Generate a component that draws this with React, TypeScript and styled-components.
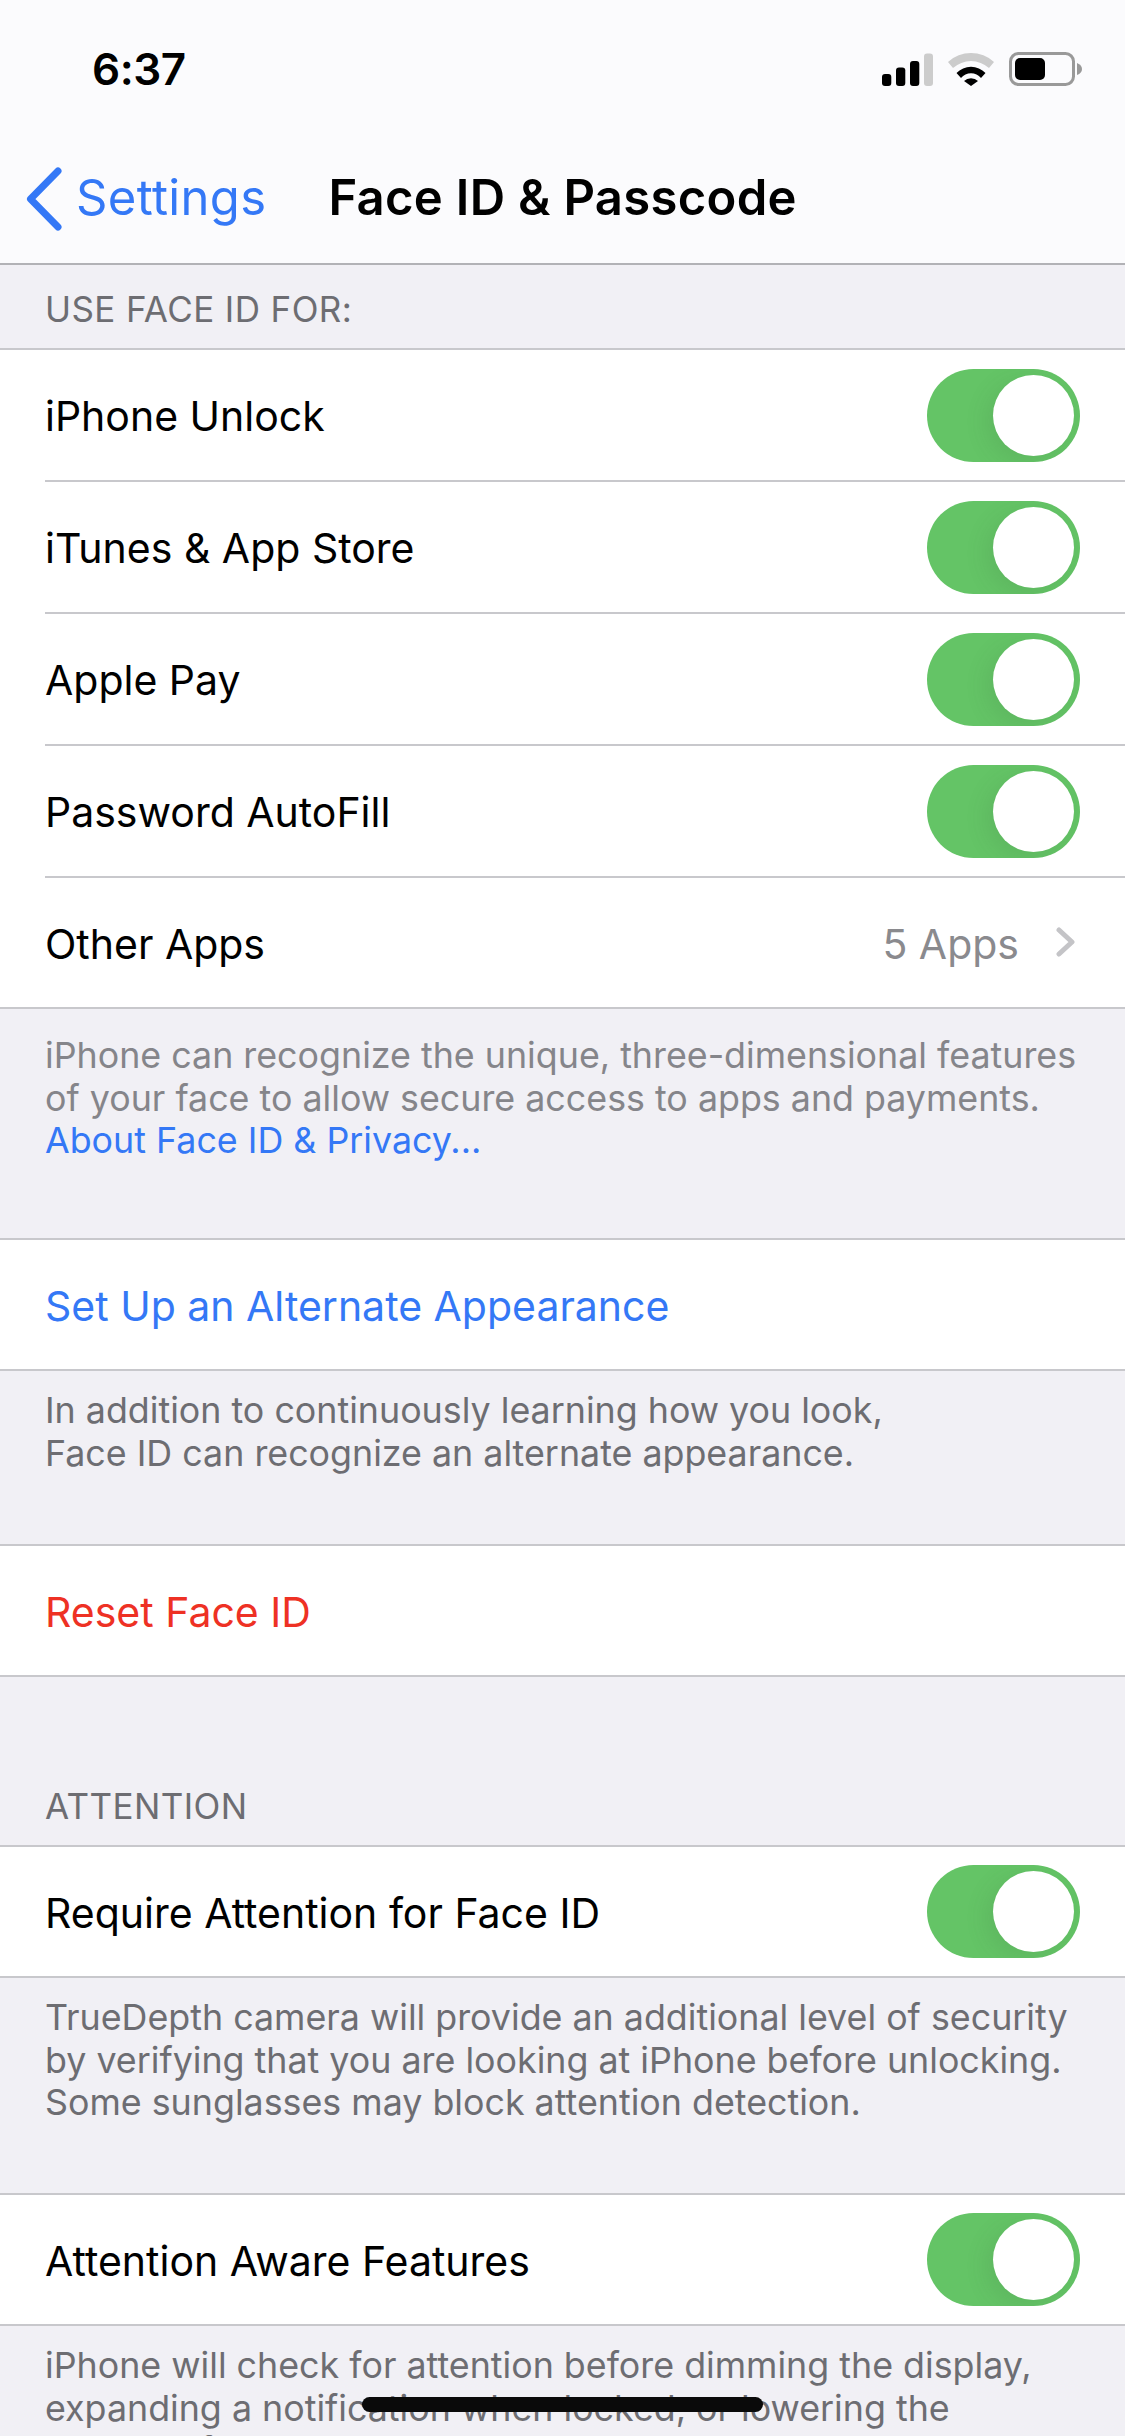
import React from 'react';
import styled, { createGlobalStyle } from 'styled-components';

const GlobalStyle = createGlobalStyle`
  html, body {
    margin: 0;
    padding: 0;
    background: #f1f0f5;
  }
  * {
    box-sizing: border-box;
  }
`;

const Screen = styled.div`
  position: relative;
  width: 1125px;
  height: 2436px;
  overflow: hidden;
  background: #f1f0f5;
  font-family: Inter, 'Liberation Sans', sans-serif;
  color: #000;
`;

const NavArea = styled.header`
  height: 265px;
  background: #fbfbfd;
  border-bottom: 2px solid #b2b2b6;
`;

const StatusBar = styled.div`
  height: 132px;
  display: flex;
  justify-content: space-between;
  align-items: flex-start;
  padding: 45px 43px 0 92px;
`;

const Time = styled.span`
  font-size: 44px;
  line-height: 48px;
  font-weight: 600;
  letter-spacing: -0.5px;
`;

const StatusIcons = styled.div`
  display: flex;
  align-items: center;
  gap: 15px;
  margin-top: 7px;
`;

const NavBar = styled.div`
  height: 131px;
  display: flex;
  align-items: center;
  padding-left: 26px;
`;

const BackLink = styled.div`
  display: flex;
  align-items: center;
  gap: 14px;
  color: #3478f6;
  font-size: 49px;
  letter-spacing: 0.35px;

  svg {
    margin-top: 2px;
  }
`;

const NavTitle = styled.h1`
  margin: 0 0 0 62px;
  font-size: 49px;
  font-weight: 600;
  letter-spacing: 0.3px;
`;

const SectionHeader = styled.div<{ $height: number }>`
  height: ${(p) => p.$height}px;
  display: flex;
  align-items: flex-end;
  padding: 0 45px 18px;
  font-size: 35px;
  line-height: 42px;
  color: #6d6d72;
  letter-spacing: 0.4px;
`;

const Group = styled.div`
  background: #fff;
  border-top: 2px solid #c8c8cc;
  border-bottom: 2px solid #c8c8cc;
`;

const Row = styled.div<{ $divider?: boolean }>`
  height: ${(p) => (p.$divider ? 132 : 129)}px;
  margin-left: 45px;
  padding-right: 45px;
  display: flex;
  align-items: center;
  justify-content: space-between;
  font-size: 41px;
  border-bottom: ${(p) => (p.$divider ? '2px solid #c8c8cc' : 'none')};
`;

const RowLabel = styled.span<{ $color?: string }>`
  padding-top: 2px;
  color: ${(p) => p.$color || '#000'};
`;

const Switch = styled.div`
  position: relative;
  width: 153px;
  height: 93px;
  overflow: hidden;
  border-radius: 47px;
  background: #64c466;
`;

const Knob = styled.div`
  position: absolute;
  top: 6px;
  right: 6px;
  width: 81px;
  height: 81px;
  border-radius: 50%;
  background: #fff;
  box-shadow: -6px 6px 22px rgba(60, 110, 60, 0.16);
`;

const Detail = styled.div`
  display: flex;
  align-items: center;
  gap: 37px;
  margin-right: 5px;
  padding-top: 2px;
  color: #8a8a8e;

  svg {
    margin-top: -3px;
  }
`;

const Footnote = styled.div<{ $height: number; $top?: number; $color?: string }>`
  height: ${(p) => p.$height}px;
  padding: ${(p) => p.$top ?? 18}px 45px 0;
  font-size: 35.8px;
  line-height: 42.6px;
  color: ${(p) => p.$color || '#6d6d72'};
`;

const Link = styled.span`
  color: #3478f6;
`;

const HomeIndicator = styled.div`
  position: absolute;
  left: 362px;
  top: 2397px;
  width: 401px;
  height: 15px;
  border-radius: 8px;
  background: #0a0a0a;
`;

const Toggle = () => (
  <Switch>
    <Knob />
  </Switch>
);

const SignalIcon = () => (
  <svg width="51" height="33" viewBox="0 0 51 33">
    <rect x="0" y="21" width="9.3" height="12" rx="3" fill="#000" />
    <rect x="14" y="14.5" width="9.3" height="18.5" rx="3" fill="#000" />
    <rect x="28" y="8" width="9.3" height="25" rx="3" fill="#000" />
    <rect x="42" y="0.5" width="9" height="32.5" rx="3" fill="#ccc" />
  </svg>
);

const WifiIcon = () => (
  <svg width="46" height="33" viewBox="0 0 46 33">
    <path d="M0 9 A34 34 0 0 1 46 9 L41 15 A27 27 0 0 0 5 15 Z" fill="#ccc" />
    <path d="M8.5 20 A20 20 0 0 1 37.5 20 L33 25 A13 13 0 0 0 13 25 Z" fill="#000" />
    <path d="M16 28 A10 10 0 0 1 30 28 L23 33 Z" fill="#000" />
  </svg>
);

const BatteryIcon = () => (
  <svg width="73" height="34" viewBox="0 0 73 34">
    <rect x="1.5" y="1.5" width="63" height="31" rx="8" fill="none" stroke="#999" strokeWidth="3" />
    <rect x="6" y="6" width="30" height="22" rx="5" fill="#000" />
    <path d="M68 11 Q73 13 73 17 Q73 21 68 23 Z" fill="#999" />
  </svg>
);

const BackChevron = () => (
  <svg width="36" height="64" viewBox="0 0 36 64">
    <path d="M32 4 L4.5 32 L32 60" fill="none" stroke="#3478f6" strokeWidth="7" strokeLinecap="round" strokeLinejoin="round" />
  </svg>
);

const RowChevron = () => (
  <svg width="19" height="30" viewBox="0 0 19 30">
    <path d="M3 3 L16 15 L3 27" fill="none" stroke="#c4c4c7" strokeWidth="5" strokeLinecap="round" strokeLinejoin="round" />
  </svg>
);

export default function App() {
  return (
    <Screen>
      <GlobalStyle />
      <NavArea>
        <StatusBar>
          <Time>6:37</Time>
          <StatusIcons>
            <SignalIcon />
            <WifiIcon />
            <BatteryIcon />
          </StatusIcons>
        </StatusBar>
        <NavBar>
          <BackLink>
            <BackChevron />
            Settings
          </BackLink>
          <NavTitle>Face ID &amp; Passcode</NavTitle>
        </NavBar>
      </NavArea>

      <SectionHeader $height={83}>USE FACE ID FOR:</SectionHeader>
      <Group>
        <Row $divider>
          <RowLabel>iPhone Unlock</RowLabel>
          <Toggle />
        </Row>
        <Row $divider>
          <RowLabel>iTunes &amp; App Store</RowLabel>
          <Toggle />
        </Row>
        <Row $divider>
          <RowLabel>Apple Pay</RowLabel>
          <Toggle />
        </Row>
        <Row $divider>
          <RowLabel>Password AutoFill</RowLabel>
          <Toggle />
        </Row>
        <Row>
          <RowLabel>Other Apps</RowLabel>
          <Detail>
            5 Apps
            <RowChevron />
          </Detail>
        </Row>
      </Group>
      <Footnote $height={229} $top={25} $color="#85858a">
        iPhone can recognize the unique, three-dimensional features
        <br />
        of your face to allow secure access to apps and payments.
        <br />
        <Link>About Face ID &amp; Privacy...</Link>
      </Footnote>

      <Group>
        <Row>
          <RowLabel $color="#3478f6">Set Up an Alternate Appearance</RowLabel>
        </Row>
      </Group>
      <Footnote $height={173}>
        In addition to continuously learning how you look,
        <br />
        Face ID can recognize an alternate appearance.
      </Footnote>

      <Group>
        <Row>
          <RowLabel $color="#ee3124">Reset Face ID</RowLabel>
        </Row>
      </Group>
      <SectionHeader $height={168}>ATTENTION</SectionHeader>
      <Group>
        <Row>
          <RowLabel>Require Attention for Face ID</RowLabel>
          <Toggle />
        </Row>
      </Group>
      <Footnote $height={215}>
        TrueDepth camera will provide an additional level of security
        <br />
        by verifying that you are looking at iPhone before unlocking.
        <br />
        Some sunglasses may block attention detection.
      </Footnote>

      <Group>
        <Row>
          <RowLabel>Attention Aware Features</RowLabel>
          <Toggle />
        </Row>
      </Group>
      <Footnote $height={110}>
        iPhone will check for attention before dimming the display,
        <br />
        expanding a notification when locked, or lowering the
        <br />
        volume of some alerts.
      </Footnote>

      <HomeIndicator />
    </Screen>
  );
}
